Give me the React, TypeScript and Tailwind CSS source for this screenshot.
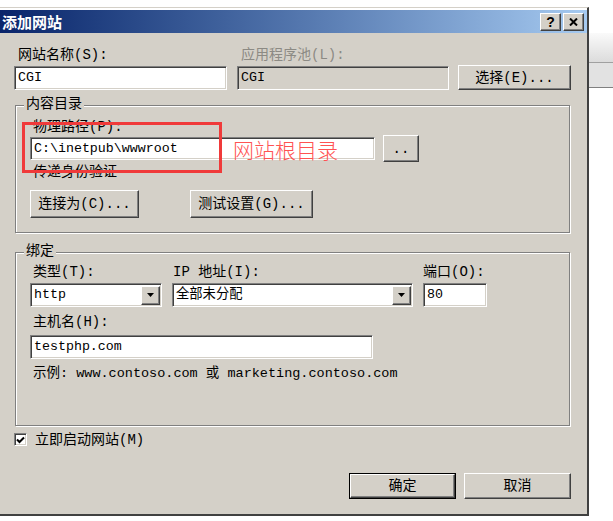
import type { ReactNode } from "react";

function Btn({ children, className = "" }: { children: ReactNode; className?: string }) {
  return (
    <button
      type="button"
      className={`flex items-center justify-center bg-[#d4d0c8] border border-t-white border-l-white border-b-[#404040] border-r-[#404040] shadow-[inset_-1px_-1px_0_#808080] text-black leading-[16px] text-[14px] ${className}`}
    >
      {children}
    </button>
  );
}

function Field({ children, className = "", disabled = false }: { children?: ReactNode; className?: string; disabled?: boolean }) {
  return (
    <div
      className={`flex items-center pl-[3px] border border-t-[#808080] border-l-[#808080] border-b-white border-r-white shadow-[inset_1px_1px_0_#404040,inset_-1px_-1px_0_#d4d0c8] text-[13.3px] text-black ${disabled ? "bg-[#d4d0c8]" : "bg-white"} ${className}`}
    >
      {children}
    </div>
  );
}

function Select({ value, className = "" }: { value: string; className?: string }) {
  return (
    <Field className={className}>
      <span className="flex-1">{value}</span>
      <span className="mr-[1px] flex h-[19px] w-[19px] items-center justify-center bg-[#d4d0c8] border border-t-white border-l-white border-b-[#404040] border-r-[#404040] shadow-[inset_-1px_-1px_0_#808080]">
        <svg width="9" height="5" viewBox="0 0 9 5">
          <path d="M1 0h7L4.5 4z" fill="#000" />
        </svg>
      </span>
    </Field>
  );
}

function Group({ title, className = "", children }: { title: string; className?: string; children: ReactNode }) {
  return (
    <div className={`relative border border-[#808080] shadow-[1px_1px_0_#fff,inset_1px_1px_0_#fff] ${className}`}>
      <span className="absolute -top-[10px] left-[8px] bg-[#d4d0c8] px-[2px] leading-[16px]">{title}</span>
      {children}
    </div>
  );
}

export default function App() {
  return (
    <div className="relative flex h-[521px] w-[613px] overflow-hidden bg-white text-[14px] text-black font-['Liberation_Mono','Noto_Sans_CJK_SC',monospace]">
      {/* dialog */}
      <div className="mt-[7px] flex h-[509px] w-[589px] flex-col border-t border-t-[#d4d0c8] border-r-2 border-r-[#404040] border-b-2 border-b-[#404040] bg-[#d4d0c8]">
        <div className="h-[2px] bg-white" />

        {/* title bar */}
        <div className="flex h-[23px] items-center bg-linear-to-r from-[#0a246a] to-[#a6caf0] pl-[2px] pr-[3px]">
          <span className="text-[15px] font-bold leading-none text-white font-['Noto_Sans_CJK_SC',sans-serif]">添加网站</span>
          <div className="ml-auto flex gap-[2px]">
            <span className="flex h-[18px] w-[21px] items-center justify-center bg-[#d4d0c8] border border-t-white border-l-white border-b-[#404040] border-r-[#404040] shadow-[inset_-1px_-1px_0_#808080] text-[14px] font-bold leading-none font-['Liberation_Sans',sans-serif]">
              ?
            </span>
            <span className="flex h-[18px] w-[21px] items-center justify-center bg-[#d4d0c8] border border-t-white border-l-white border-b-[#404040] border-r-[#404040] shadow-[inset_-1px_-1px_0_#808080]">
              <svg width="9" height="8" viewBox="0 0 9 8">
                <path d="M1 0.5l7 7M8 0.5l-7 7" stroke="#000" strokeWidth="2" />
              </svg>
            </span>
          </div>
        </div>

        {/* body */}
        <div className="flex flex-1 flex-col pl-[14px] pr-[16px] pt-[14px]">
          {/* site name / pool */}
          <div className="flex items-end">
            <div className="w-[213px]">
              <div className="pl-[4px] leading-[16px]">网站名称(S):</div>
              <Field className="mt-[3px] h-[24px]">CGI</Field>
            </div>
            <div className="ml-[10px] w-[212px]">
              <div className="pl-[4px] leading-[16px] text-[#8c8a84]">应用程序池(L):</div>
              <Field disabled className="mt-[3px] h-[24px]">CGI</Field>
            </div>
            <Btn className="ml-[9px] h-[25px] w-[113px]">选择(E)...</Btn>
          </div>

          {/* content directory */}
          <Group title="内容目录" className="ml-[1px] mt-[15px] h-[128px] w-[555px] pl-[14px] pt-[13px]">
            <div className="pl-[3px] leading-[16px]">物理路径(P):</div>
            <div className="flex h-[27px] items-center">
              <Field className="h-[23px] w-[345px]">C:\inetpub\wwwroot</Field>
              <Btn className="ml-[8px] h-[27px] w-[36px]">..</Btn>
            </div>
            <div className="mt-[2px] pl-[3px] leading-[16px]">传递身份验证</div>
            <div className="mt-[10px] flex">
              <Btn className="h-[28px] w-[109px]">连接为(C)...</Btn>
              <Btn className="ml-[51px] h-[28px] w-[123px]">测试设置(G)...</Btn>
            </div>
          </Group>

          {/* binding */}
          <Group title="绑定" className="ml-[1px] mt-[19px] h-[174px] w-[555px] pl-[14px] pt-[11px]">
            <div className="flex leading-[16px]">
              <div className="w-[132px] pl-[3px]">类型(T):</div>
              <div className="ml-[10px] w-[241px] pl-[1px]">IP 地址(I):</div>
              <div className="ml-[10px] w-[64px]">端口(O):</div>
            </div>
            <div className="mt-[3px] flex">
              <Select value="http" className="h-[24px] w-[132px]" />
              <Select value="全部未分配" className="ml-[10px] h-[24px] w-[241px]" />
              <Field className="ml-[10px] h-[24px] w-[64px]">80</Field>
            </div>
            <div className="mt-[7px] pl-[3px] leading-[16px]">主机名(H):</div>
            <Field className="mt-[5px] h-[24px] w-[343px]">testphp.com</Field>
            <div className="mt-[7px] pl-[3px] text-[13.5px] leading-[16px]">示例: www.contoso.com 或 marketing.contoso.com</div>
          </Group>

          {/* start site */}
          <div className="mt-[7px] flex h-[13px] items-center">
            <span className="flex h-[13px] w-[13px] items-center justify-center bg-white border border-t-[#808080] border-l-[#808080] border-b-white border-r-white shadow-[inset_1px_1px_0_#404040,inset_-1px_-1px_0_#d4d0c8]">
              <svg width="9" height="8" viewBox="0 0 9 8">
                <path d="M1 3.5l2.5 2.5L8 1.5" stroke="#000" strokeWidth="2" fill="none" />
              </svg>
            </span>
            <span className="ml-[8px] leading-[16px]">立即启动网站(M)</span>
          </div>

          {/* ok / cancel */}
          <div className="mt-[27px] flex justify-end gap-[8px]">
            <div className="h-[26px] w-[107px] border border-black">
              <Btn className="h-full w-full">确定</Btn>
            </div>
            <Btn className="h-[26px] w-[107px]">取消</Btn>
          </div>
        </div>
      </div>

      {/* window behind */}
      <div className="flex flex-1 flex-col">
        <div className="h-[33px] bg-white" />
        <div className="h-[30px] border-b border-b-[#a0a0a0] bg-linear-to-b from-[#fafafa] to-[#dcdcdc]" />
        <div className="h-[25px] border-b border-b-[#808080] bg-[#e2e2e2]" />
        <div className="flex-1 bg-white" />
      </div>

      {/* annotation */}
      <div className="absolute left-[22px] top-[122px] h-[51px] w-[200px] border-[3px] border-[#f03a3a]" />
      <span className="absolute left-[233px] top-[137px] text-[21px] font-light leading-[24px] text-[#ff5252] font-['Noto_Sans_CJK_SC',sans-serif]">
        网站根目录
      </span>
    </div>
  );
}
